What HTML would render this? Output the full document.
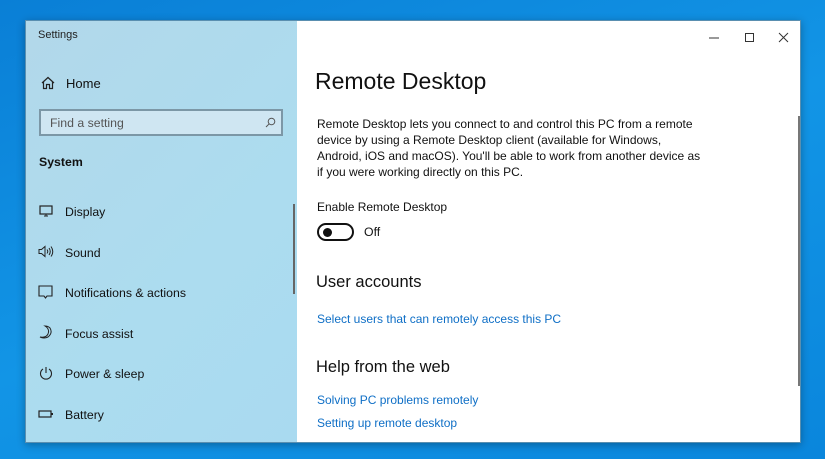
<!DOCTYPE html>
<html><head><style>
*{margin:0;padding:0;box-sizing:border-box}
body{width:825px;height:459px;overflow:hidden;background:linear-gradient(160deg,#0a7fd6 0%,#1295e6 50%,#0a86dc 100%);font-family:"Liberation Sans",sans-serif;position:relative}
.win{position:absolute;left:25px;top:20px;width:776px;height:423px;background:#fff;border:1px solid #5a8fb0;box-shadow:0 2px 8px rgba(0,0,0,.3)}
.side{position:absolute;left:0;top:0;width:271px;height:100%;background:linear-gradient(135deg,#b2d8ea,#acdcef 60%,#a9daf0)}
.t{position:absolute;font-size:13.5px;color:#111;white-space:nowrap}
.s{font-size:12.3px}
.ic{position:absolute}
.search{position:absolute;left:13px;top:88px;width:244px;height:27px;border:2px solid #7c97a6;background:#cfe6f2}
.link{color:#0f6fc6}
</style></head><body>
<div class="win">
 <div class="side">
  <div class="t" style="left:12px;top:8px;font-size:11px;color:#222">Settings</div>
  <svg class="ic" style="left:15px;top:55px" width="14" height="14" viewBox="0 0 14 14"><path d="M1 7 L7 1.5 L13 7 M2.5 6 V12.5 H5.5 V8.5 H8.5 V12.5 H11.5 V6" fill="none" stroke="#222" stroke-width="1.2"/></svg>
  <div class="t" style="left:40px;top:55px;font-size:13px">Home</div>
  <div class="search"><div class="t" style="left:9px;top:5px;color:#555;font-size:12.3px">Find a setting</div>
   <svg class="ic" style="left:224px;top:6px" width="11" height="11" viewBox="0 0 11 11"><circle cx="6.5" cy="4.5" r="3.3" fill="none" stroke="#555"/><path d="M4.2 6.8 L1 10" stroke="#555"/></svg></div>
  <div class="t" style="left:13px;top:134px;font-weight:bold;font-size:12.3px">System</div>
  <svg class="ic" style="left:13px;top:184px" width="14" height="12" viewBox="0 0 14 12"><rect x="1" y="1" width="12" height="8" fill="none" stroke="#222" stroke-width="1.2"/><path d="M5 11H9M7 9V11" stroke="#222"/></svg>
  <div class="t s" style="left:39px;top:184px">Display</div>
  <svg class="ic" style="left:12px;top:224px" width="16" height="13" viewBox="0 0 16 13"><path d="M1 4.5H3.5L7 1.5V11.5L3.5 8.5H1Z" fill="none" stroke="#222"/><path d="M9 4.5Q10.5 6.5 9 8.5M11 3Q13.5 6.5 11 10M13 1.5Q16.5 6.5 13 11.5" fill="none" stroke="#222"/></svg>
  <div class="t s" style="left:39px;top:225px">Sound</div>
  <svg class="ic" style="left:12px;top:264px" width="15" height="15" viewBox="0 0 15 15"><path d="M1 1H14V11H9L7.5 13L6 11H1Z" fill="none" stroke="#222" stroke-width="1.1"/></svg>
  <div class="t s" style="left:39px;top:265px">Notifications &amp; actions</div>
  <svg class="ic" style="left:13px;top:304px" width="14" height="15" viewBox="0 0 14 15"><path d="M6 1Q11 4 9 9Q7 13 1 12Q5 14 9 12Q14 8 11 3Q9 1 6 1Z" fill="none" stroke="#222"/></svg>
  <div class="t s" style="left:39px;top:306px">Focus assist</div>
  <svg class="ic" style="left:13px;top:345px" width="14" height="14" viewBox="0 0 14 14"><path d="M4 3A5.5 5.5 0 1 0 10 3" fill="none" stroke="#222" stroke-width="1.1"/><path d="M7 1V7" stroke="#222" stroke-width="1.1"/></svg>
  <div class="t s" style="left:39px;top:346px">Power &amp; sleep</div>
  <svg class="ic" style="left:12px;top:389px" width="16" height="8" viewBox="0 0 16 8"><rect x="1" y="1" width="12" height="6" fill="none" stroke="#222" stroke-width="1.2"/><rect x="13.5" y="3" width="1.5" height="2" fill="#222"/></svg>
  <div class="t s" style="left:39px;top:387px">Battery</div>
  <div style="position:absolute;left:267px;top:183px;width:2px;height:90px;background:#666"></div>
 </div>
 <svg class="ic" style="left:683px;top:10px" width="90" height="14" viewBox="0 0 90 14"><path d="M0 7H10" stroke="#333"/><rect x="36.5" y="2.5" width="8" height="8" fill="none" stroke="#333"/><path d="M70 2L79 11M79 2L70 11" stroke="#333"/></svg>
 <div class="t" style="left:289px;top:47px;font-size:23px;color:#111">Remote Desktop</div>
 <div class="t" style="left:291px;top:95px;font-size:12px;line-height:16px;color:#111">Remote Desktop lets you connect to and control this PC from a remote<br>device by using a Remote Desktop client (available for Windows,<br>Android, iOS and macOS). You'll be able to work from another device as<br>if you were working directly on this PC.</div>
 <div class="t" style="left:291px;top:179px;font-size:12px">Enable Remote Desktop</div>
 <div style="position:absolute;left:291px;top:202px;width:37px;height:18px;border:2px solid #111;border-radius:9px"><div style="position:absolute;left:4px;top:3px;width:9px;height:9px;border-radius:50%;background:#111"></div></div>
 <div class="t" style="left:338px;top:204px;font-size:12.3px">Off</div>
 <div class="t" style="left:290px;top:252px;font-size:16.5px">User accounts</div>
 <div class="t link" style="left:291px;top:291px;font-size:12px">Select users that can remotely access this PC</div>
 <div class="t" style="left:290px;top:337px;font-size:16.5px">Help from the web</div>
 <div class="t link" style="left:291px;top:372px;font-size:12px">Solving PC problems remotely</div>
 <div class="t link" style="left:291px;top:395px;font-size:12px">Setting up remote desktop</div>
 <div style="position:absolute;left:772px;top:95px;width:2px;height:270px;background:#777"></div>
</div>
</body></html>
